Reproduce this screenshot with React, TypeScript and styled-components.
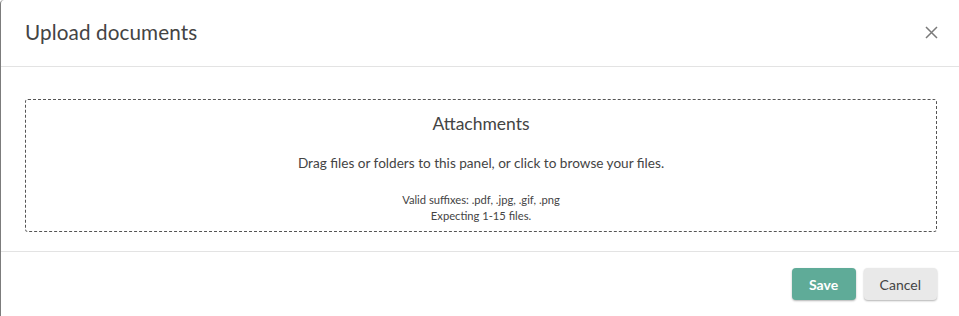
import React from "react";
import styled, { createGlobalStyle } from "styled-components";

const Global = createGlobalStyle`
  html, body { margin: 0; padding: 0; background: #ffffff; }
  body { font-family: Lato, "Open Sans", sans-serif; }
  * { box-sizing: border-box; }
`;

const Modal = styled.div`
  width: 959px;
  height: 316px;
  background: #fff;
  border-left: 1px solid #7c7c7c;
  border-top-left-radius: 4px;
  display: flex;
  flex-direction: column;
  overflow: hidden;
`;

const Header = styled.div`
  height: 67px;
  display: flex;
  align-items: center;
  justify-content: space-between;
  padding: 0 21px 2px 24px;
  border-bottom: 1px solid #e3e3e3;
`;

const Title = styled.h2`
  margin: 0;
  font-size: 20.7px;
  font-weight: 400;
  color: #444;
  letter-spacing: 0.1px;
`;

const CloseButton = styled.button`
  border: none;
  background: none;
  padding: 0;
  width: 14px;
  height: 14px;
  display: flex;
  align-items: center;
  justify-content: center;
  cursor: pointer;
`;

const Body = styled.div`
  padding: 32px 22px 19px 24px;
  border-bottom: 1px solid #e3e3e3;
`;

const DropZone = styled.div`
  height: 133px;
  border: 1px dashed #555;
  border-radius: 3px;
  display: flex;
  flex-direction: column;
  align-items: center;
  padding-top: 12px;
  color: #444;
  text-align: center;
`;

const ZoneTitle = styled.div`
  font-size: 17.5px;
  line-height: 24px;
  color: #444;
`;

const ZoneText = styled.div`
  margin-top: 18px;
  font-size: 13.6px;
  line-height: 18px;
  color: #444;
`;

const ZoneNote = styled.div<{ $first?: boolean }>`
  margin-top: ${(p) => (p.$first ? "20px" : "0")};
  font-size: 11.2px;
  line-height: 16px;
  color: #444;
`;

const Footer = styled.div`
  display: flex;
  justify-content: flex-end;
  gap: 8px;
  padding: 16px 22px 0 0;
`;

const Button = styled.button<{ $primary?: boolean }>`
  height: 32px;
  padding: 0 16px;
  border: none;
  border-radius: 4px;
  font-family: Lato, "Open Sans", sans-serif;
  font-size: 14px;
  font-weight: ${(p) => (p.$primary ? 700 : 400)};
  color: ${(p) => (p.$primary ? "#fff" : "#444")};
  background: ${(p) => (p.$primary ? "#5fab98" : "#e9e9e9")};
  box-shadow: 0 1px 2px rgba(0, 0, 0, 0.3);
  cursor: pointer;
  min-width: ${(p) => (p.$primary ? "64px" : "73px")};
`;

export default function App() {
  return (
    <>
      <Global />
      <Modal>
        <Header>
          <Title>Upload documents</Title>
          <CloseButton aria-label="Close">
            <svg width="13" height="13" viewBox="0 0 13 13">
              <path d="M1 1L12 12M12 1L1 12" stroke="#7a7a7a" strokeWidth="1.5" />
            </svg>
          </CloseButton>
        </Header>
        <Body>
          <DropZone>
            <ZoneTitle>Attachments</ZoneTitle>
            <ZoneText>Drag files or folders to this panel, or click to browse your files.</ZoneText>
            <ZoneNote $first>Valid suffixes: .pdf, .jpg, .gif, .png</ZoneNote>
            <ZoneNote>Expecting 1-15 files.</ZoneNote>
          </DropZone>
        </Body>
        <Footer>
          <Button $primary>Save</Button>
          <Button>Cancel</Button>
        </Footer>
      </Modal>
    </>
  );
}
